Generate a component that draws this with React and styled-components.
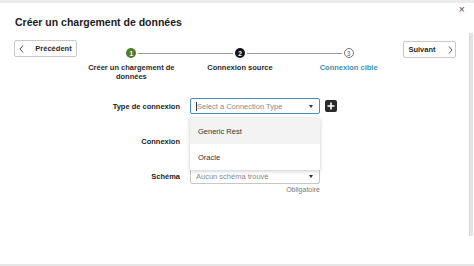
import styled, { createGlobalStyle } from "styled-components";

const GlobalStyle = createGlobalStyle`
  html, body {
    margin: 0;
    padding: 0;
    background: #fff;
  }
  body {
    font-family: "Liberation Sans", Arial, sans-serif;
    color: #161513;
  }
`;

const Dialog = styled.div`
  position: relative;
  width: 474px;
  height: 266px;
  box-sizing: border-box;
  border-top: 3px solid #ececec;
  border-bottom: 2px solid #e6e6e6;
  overflow: hidden;
`;

const Header = styled.div`
  display: flex;
  justify-content: space-between;
  align-items: flex-start;
  padding: 6px 9px 0 15px;
  height: 34px;
  box-sizing: border-box;
`;

const Title = styled.h1`
  margin: 7px 0 0;
  font-size: 10.5px;
  font-weight: bold;
  color: #1c1c1c;
`;

const Close = styled.span`
  margin-top: -5px;
  font-size: 11px;
  color: #555;
  line-height: 1;
`;

const Scrollbar = styled.div`
  position: absolute;
  right: 1px;
  top: 30px;
  width: 3px;
  height: 203px;
  background: #e4e4e4;
  border-left: 1px solid #d6d6d6;
`;

const WizardRow = styled.div`
  display: flex;
  align-items: flex-start;
  padding: 0 18px 0 14px;
`;

const NavButton = styled.button`
  display: flex;
  align-items: center;
  justify-content: center;
  gap: ${(p) => (p.$next ? "12px" : "11px")};
  width: ${(p) => (p.$next ? "53px" : "63px")};
  height: 17px;
  margin-top: ${(p) => (p.$next ? "4px" : "3px")};
  padding: 0 0 0 ${(p) => (p.$next ? "2px" : "0")};
  background: #fff;
  border: 1px solid #c9c9c9;
  border-radius: 2px;
  font-family: "Liberation Sans", Arial, sans-serif;
  font-size: 7.5px;
  font-weight: bold;
  color: #2a2a2a;
`;

const Chevron = styled.svg`
  width: 5px;
  height: 8px;
`;

const Train = styled.div`
  flex: 1;
  display: grid;
  grid-template-columns: repeat(3, 1fr);
`;

const Step = styled.div`
  position: relative;
  display: flex;
  flex-direction: column;
  align-items: center;
  padding-top: 11px;
`;

const Connector = styled.div`
  position: absolute;
  top: 16px;
  left: calc(50% + 7px);
  width: calc(100% - 14px);
  height: 1px;
  background: #9a9a9a;
`;

const Circle = styled.div`
  width: 10px;
  height: 10px;
  box-sizing: border-box;
  border-radius: 50%;
  display: flex;
  align-items: center;
  justify-content: center;
  font-size: 6.5px;
  color: ${(p) => (p.$state === "todo" ? "#666" : "#fff")};
  background: ${(p) =>
    p.$state === "done" ? "#4f7d2a" : p.$state === "current" ? "#161513" : "#fff"};
  border: ${(p) => (p.$state === "todo" ? "1px solid #777" : "none")};
  font-weight: ${(p) => (p.$state === "todo" ? "normal" : "bold")};
`;

const StepLabel = styled.div`
  margin-top: 5px;
  font-size: 7.5px;
  font-weight: bold;
  line-height: 9px;
  text-align: center;
  color: ${(p) => (p.$active ? "#3f8fae" : "#2a2a2a")};
  width: 104px;
`;

const Form = styled.div`
  display: grid;
  grid-template-columns: 190px 130px 1fr;
  row-gap: 19px;
  margin-top: 17px;
  align-items: center;
`;

const Label = styled.div`
  text-align: right;
  padding-right: 10px;
  font-size: 7.5px;
  font-weight: bold;
  color: #222;
`;

const FieldCell = styled.div`
  position: relative;
  height: 16px;
`;

const Select = styled.div`
  display: flex;
  align-items: center;
  justify-content: space-between;
  height: 16px;
  box-sizing: border-box;
  padding: 0 6px 0 5px;
  border: 1px solid ${(p) => (p.$focused ? "#4a8fb3" : "#c6c6c6")};
  border-radius: 2px;
  font-size: 7.5px;
  color: #8a8a8a;
  background: #fff;
`;

const Placeholder = styled.span`
  display: flex;
  align-items: center;
`;

const Cursor = styled.span`
  width: 1px;
  height: 9px;
  background: #333;
`;

const Caret = styled.span`
  width: 0;
  height: 0;
  border-left: 2.5px solid transparent;
  border-right: 2.5px solid transparent;
  border-top: 3px solid #333;
`;

const AddButton = styled.div`
  width: 12px;
  height: 12px;
  border-radius: 2px;
  background: #2a2a2a;
  display: flex;
  align-items: center;
  justify-content: center;
  margin-left: 5px;
`;

const Menu = styled.div`
  position: absolute;
  left: 0;
  right: 0;
  top: 20px;
  background: #fff;
  box-shadow: 0 1px 4px rgba(0, 0, 0, 0.22);
  z-index: 2;
`;

const Option = styled.div`
  height: 26px;
  display: flex;
  align-items: center;
  padding-left: 8px;
  font-size: 7.5px;
  color: #333;
  background: ${(p) => (p.$hover ? "#f3f3f3" : "#fff")};
`;

const Hint = styled.div`
  position: absolute;
  right: 0;
  top: 18px;
  font-size: 7px;
  color: #7a7a7a;
`;

const steps = [
  { n: 1, label: "Créer un chargement de données", state: "done" },
  { n: 2, label: "Connexion source", state: "current" },
  { n: 3, label: "Connexion cible", state: "todo" },
];

export default function App() {
  return (
    <>
      <GlobalStyle />
      <Dialog>
        <Header>
          <Title>Créer un chargement de données</Title>
          <Close>×</Close>
        </Header>
        <Scrollbar />

        <WizardRow>
          <NavButton>
            <Chevron viewBox="0 0 5 8">
              <path d="M4 0.5 L1 4 L4 7.5" fill="none" stroke="#444" strokeWidth="0.9" />
            </Chevron>
            Précédent
          </NavButton>
          <Train>
            {steps.map((s, i) => (
              <Step key={s.n}>
                {i < steps.length - 1 && <Connector />}
                <Circle $state={s.state}>{s.n}</Circle>
                <StepLabel $active={s.state === "todo"}>{s.label}</StepLabel>
              </Step>
            ))}
          </Train>
          <NavButton $next>
            Suivant
            <Chevron viewBox="0 0 5 8">
              <path d="M1 0.5 L4 4 L1 7.5" fill="none" stroke="#444" strokeWidth="0.9" />
            </Chevron>
          </NavButton>
        </WizardRow>

        <Form>
          <Label>Type de connexion</Label>
          <FieldCell>
            <Select $focused>
              <Placeholder>
                <Cursor />
                Select a Connection Type
              </Placeholder>
              <Caret />
            </Select>
            <Menu>
              <Option $hover>Generic Rest</Option>
              <Option>Oracle</Option>
            </Menu>
          </FieldCell>
          <AddButton>
            <svg width="8" height="8" viewBox="0 0 8 8">
              <path d="M4 0.5 V7.5 M0.5 4 H7.5" stroke="#fff" strokeWidth="1.6" />
            </svg>
          </AddButton>

          <Label>Connexion</Label>
          <FieldCell />
          <div />

          <Label>Schéma</Label>
          <FieldCell>
            <Select>
              Aucun schéma trouvé
              <Caret />
            </Select>
            <Hint>Obligatoire</Hint>
          </FieldCell>
          <div />
        </Form>
      </Dialog>
    </>
  );
}
